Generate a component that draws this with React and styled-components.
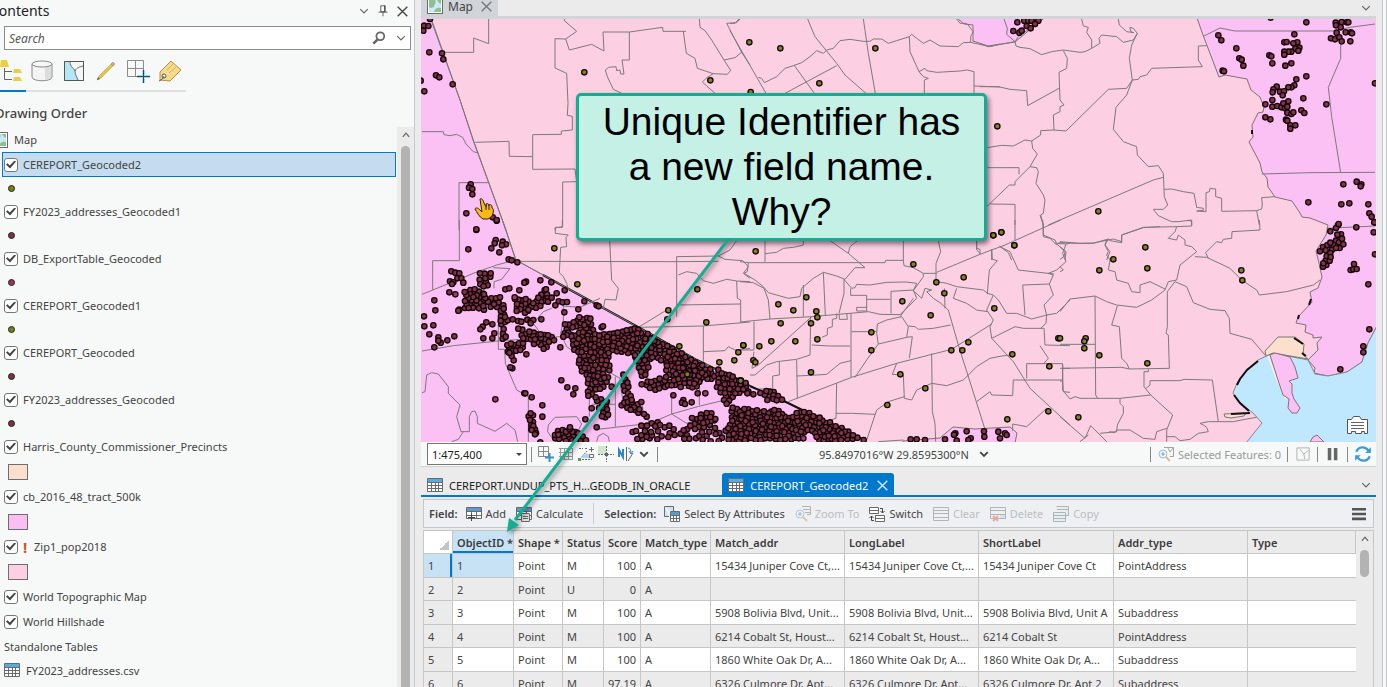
import React, { useState } from "react";
import styled, { createGlobalStyle } from "styled-components";

const layers = [
  { name: "CEREPORT_Geocoded2", dot: "#768022" },
  { name: "FY2023_addresses_Geocoded1", dot: "#7d3242" },
  { name: "DB_ExportTable_Geocoded", dot: "#9c3358" },
  { name: "CEREPORT_Geocoded1", dot: "#768022" },
  { name: "CEREPORT_Geocoded", dot: "#7d3242" },
  { name: "FY2023_addresses_Geocoded", dot: "#7d3242" },
  { name: "Harris_County_Commissioner_Precincts", swatch: "#fcdfcd" },
  { name: "cb_2016_48_tract_500k", swatch: "#fbbef3" },
  { name: "Zip1_pop2018", swatch: "#fccfe2", warning: true },
  { name: "World Topographic Map" },
  { name: "World Hillshade" },
];

const columns = [
  { name: "ObjectID *", width: 61 },
  { name: "Shape *", width: 49 },
  { name: "Status", width: 41 },
  { name: "Score", width: 37, right: true },
  { name: "Match_type", width: 70 },
  { name: "Match_addr", width: 134 },
  { name: "LongLabel", width: 134 },
  { name: "ShortLabel", width: 135 },
  { name: "Addr_type", width: 134 },
  { name: "Type" },
];

const records = [
  ["1", "Point", "M", "100", "A", "15434 Juniper Cove Ct,...", "15434 Juniper Cove Ct,...", "15434 Juniper Cove Ct", "PointAddress", ""],
  ["2", "Point", "U", "0", "A", "", "", "", "", ""],
  ["3", "Point", "M", "100", "A", "5908 Bolivia Blvd, Unit...", "5908 Bolivia Blvd, Unit...", "5908 Bolivia Blvd, Unit A", "Subaddress", ""],
  ["4", "Point", "M", "100", "A", "6214 Cobalt St, Houst...", "6214 Cobalt St, Houst...", "6214 Cobalt St", "PointAddress", ""],
  ["5", "Point", "M", "100", "A", "1860 White Oak Dr, A...", "1860 White Oak Dr, A...", "1860 White Oak Dr, A...", "Subaddress", ""],
  ["6", "Point", "M", "97.19", "A", "6326 Culmore Dr, Apt...", "6326 Culmore Dr, Apt...", "6326 Culmore Dr, Apt 2", "Subaddress", ""],
];

// Map sheets. Coordinates are thirds of a pixel, measured from the sheet origin.
const sheets = [
  {
    x: 420, y: 0,
    lines: [
      "32,57 120,300 160,420 258,690",
      "72,157 161,157 161,114 206,131 206,57",
      "6,395 70,395 72,404 90,407 110,403 128,412 138,432 160,455 172,458",
      "166,427 267,424 268,469 338,470 338,404 424,403 424,393 457,390 457,349 442,346 444,310 440,220 405,204 405,116 437,117 448,150 515,133 552,153 549,96 628,96 728,82 729,94 798,94",
      "790,94 799,160 825,175 832,205 880,221 922,223 932,211 912,180 875,120 855,92 840,82 838,57",
      "338,470 338,508 465,507 470,545 428,546 428,680 405,684 405,690",
      "437,117 470,94 433,62 433,57",
      "628,96 628,180 606,180 612,222 602,222 600,210 590,212 588,200 566,202 556,210 562,230 580,268 605,280",
      "117,690 117,548 206,548",
      "912,180 945,173 965,157 920,70 950,68 960,57",
      "965,157 990,195",
      "885,280 847,246 862,232 880,221",
    ],
    red: "12,77 25,78 10,92 28,157 66,160 70,178 48,226 58,232 98,253 13,274 2,242 152,553 147,563 157,567 157,583 139,640 218,652 230,662 169,690 30,57",
    green: "493,217 871,241",
  },
  {
    x: 420, y: 220,
    lines: [
      "118,0 118,122 38,122 38,210",
      "6,223 100,185 165,158 230,135 287,120",
      "247,0 287,120 370,165 655,322 830,420 990,500",
      "287,124 770,125 895,124",
      "427,0 427,22 406,22 406,40 445,45 438,52 440,80 422,82 418,158 430,170 440,190 445,210",
      "569,60 575,180 595,205 588,240 555,238 550,265",
      "770,290 770,110 895,108 930,90 950,62",
      "895,108 915,118 968,122 985,140 970,160 990,175",
      "775,165 800,155 830,160 850,182 880,190 920,178 950,183 990,185",
      "950,183 952,235 962,240 962,252",
      "770,255 962,252 962,305",
      "655,322 740,270",
      "655,322 850,318 990,306",
      "850,318 850,425 870,440",
      "850,395 915,392 925,380 945,390 990,385",
      "6,393 100,377 235,363 420,350 560,335 655,322",
      "235,255 235,388 254,388 256,430 290,510 325,530 325,665",
      "222,205 222,185 245,178 270,146 220,143",
      "6,518 15,515 20,465 35,458 55,462 85,500 85,520 120,555 110,590 123,635 148,635 148,590 155,575 165,573 172,590 172,610 225,634 260,610 285,630 293,665",
      "95,665 115,658 130,635",
      "400,660 383,635 385,615 405,592 470,590 485,612 470,640",
      "395,265 370,275 340,310 365,345",
      "430,255 430,300 422,340 440,380 470,400 490,430",
      "430,258 480,262 540,235",
      "586,470 586,620",
      "508,500 508,590",
      "515,553 586,553",
      "530,628 560,625 690,610 755,582 840,558 915,540 990,500",
      "755,582 755,520",
      "755,582 800,610 830,600",
      "665,545 670,580 690,610",
      "790,505 838,505 838,555",
      "565,455 600,475 605,520 610,545",
      "530,665 535,648 550,640 565,650 568,665",
    ],
    red: "169,28 145,88 227,60 224,70 248,65 258,73 246,76 214,85 238,97 266,118 275,121 292,127 230,0 94,154 106,158 118,160 90,184 100,187 96,192 112,175 124,175 130,188 88,217 43,241 46,271 12,289 40,316 13,319 28,343 55,352 62,368 55,362 82,361 103,349 43,382 118,269 115,272 256,208 268,205 298,211 318,185 313,188 361,181 394,187 378,208 410,220 434,211 416,244 428,247 441,246 406,256 433,277 475,268 493,244 530,256 536,259 364,298 340,300 332,310 199,307 217,313 188,320 181,328 190,355 217,355 223,340 421,382 319,403 277,445 271,442 281,421 275,408 268,398 424,481 442,502 466,505 460,523 313,520 316,520 335,532 367,556 367,590 332,580 330,600 340,618 335,630 345,643 361,667 515,565 496,598 530,622 545,322 549,319 575,500 760,526 833,520 815,547 790,540 786,548 795,552 450,622 475,640 635,540 680,590 672,582 440,345 430,350 228,235 240,232",
    green: "403,85 472,193 832,208 745,271 742,298 859,307 778,379 970,376 955,397 943,421 898,427 802,463 958,482",
    pink: "106,223 226,538 478,292 284,232 856,520",
    clusters: [
      [28, "132,215 160,205 195,220 195,270 150,262 135,275"],
      [10, "180,160 215,158 205,200 175,200"],
      [9, "190,222 235,240 240,270 210,265"],
      [20, "285,235 325,235 332,280 285,275"],
      [20, "320,270 378,205 398,235 350,270"],
      [15, "240,255 250,255 262,360 242,355"],
      [10, "255,290 340,300 335,310 255,300"],
      [14, "255,365 310,368 310,388 262,400"],
      [28, "290,325 400,345 405,360 375,390 310,355"],
      [26, "435,305 510,290 530,345 430,350"],
      [54, "450,350 480,335 555,340 560,395 460,390"],
      [52, "475,395 565,395 570,455 530,470 478,460"],
      [120, "560,340 650,325 700,350 690,425 650,425 640,400 560,400"],
      [140, "690,350 760,385 870,445 890,475 840,480 740,430 690,410"],
      [20, "640,400 690,430 670,480 655,440"],
      [66, "740,430 860,460 830,505 740,500 700,515 660,490 700,475 735,475"],
      [22, "500,465 575,470 560,500 505,530"],
      [14, "525,530 565,545 565,600 545,590"],
      [28, "605,455 620,470 640,560 665,545 655,580 600,555 615,525"],
      [38, "890,445 990,495 980,515 930,540 890,510"],
      [7, "912,540 930,540 925,555 912,550"],
      [54, "935,560 990,575 990,665 925,662"],
      [56, "620,630 700,600 780,625 880,580 900,620 940,625 900,665 645,660"],
      [14, "810,595 870,575 895,600 850,610"],
      [32, "405,635 450,625 505,660 495,665 400,665"],
      [7, "325,585 340,585 350,645 330,635"],
    ],
  },
  {
    x: 740, y: 220,
    lines: [
      "0,125 25,128 435,128 437,121 490,121 490,60",
      "75,60 75,125",
      "75,101 110,97 130,85 160,82 190,75 190,60",
      "25,128 22,155 12,160 45,180 70,200 85,218 145,235 180,230 185,205 220,175 250,157 290,168 315,178 345,143 375,143 325,100 270,62",
      "0,185 40,188 72,205 85,240 90,297",
      "0,306 90,297 215,290 330,280 385,275 420,283 480,284 505,260 530,235 520,210 453,214 453,280",
      "190,195 190,290", "250,157 256,285", "312,178 312,220 297,280",
      "325,100 330,80 355,60",
      "312,178 335,205 345,203 350,193 390,195 440,187 500,186 530,190 520,212 550,170 550,160",
      "332,205 332,226 380,226 380,273 350,273 350,262 380,262", "380,238 450,238",
      "490,121 492,137 520,143 550,160 590,160",
      "590,157 720,103 795,75 962,0",
      "595,62 602,95 588,130 588,185",
      "710,62 710,85 720,88 720,103",
      "825,0 825,60", "780,80 810,95 835,150 942,162",
      "755,88 757,118 772,122 748,150 742,220 760,225",
      "908,0 910,45 945,60 950,70 978,72 990,70", "978,72 968,100 978,125 950,150 925,160 940,165 928,192",
      "848,195 928,192 940,225 912,255 920,285 875,297 830,280 800,280 775,240 760,225 740,270 760,300 750,320 755,355",
      "848,195 855,285",
      "920,285 950,280 990,240", "920,285 918,310 902,325",
      "520,212 545,235 555,205 575,210 560,215 580,235 600,248 625,270 655,375 735,628",
      "520,235 480,290",
      "590,185 620,190 650,200 690,205 730,210 745,222",
      "650,205 640,235 680,250 710,270 742,275",
      "613,205 615,265",
      "410,340 412,312 440,300 485,290 505,320 500,352 415,372 410,340",
      "505,318 525,320 535,328 580,325 632,315",
      "333,280 333,472", "335,335 410,335", "500,352 517,350 508,415",
      "415,372 380,420 345,472",
      "145,545 335,472 470,430 635,388 755,312",
      "755,355 825,320 850,325 912,325 915,375 990,377",
      "755,355 820,425 870,505 962,590 990,615",
      "900,377 925,415 910,432",
      "860,475 860,431 968,431 968,480", "820,480 968,480 970,515 990,517", "968,445 990,445",
      "820,480 818,527 755,525 750,515 710,545",
      "575,400 577,575 585,610 587,665",
      "575,490 620,497 670,480 710,440 750,415 785,408 810,405",
      "470,430 457,463 490,465 493,535 515,540 530,510 575,490",
      "493,530 445,545 410,570 380,660",
      "290,490 288,595 255,605", "288,580 335,580 405,583",
      "170,420 172,535", "170,468 230,465 260,463 300,430 333,422",
      "0,390 42,390 42,305",
      "42,395 36,445 55,435 215,290",
      "30,465 45,465 80,435 110,425 170,418 210,405 212,290",
      "118,425 118,465 98,468 98,505",
      "215,375 270,378 330,378",
      "320,280 322,298 298,298 298,282", "290,280 290,295 277,298 277,320 262,325 262,345 245,352",
      "818,632 818,612 860,620 920,565",
      "415,665 490,660",
    ],
    red: "646,640 642,644 680,634 692,655 685,660 732,634 733,650 775,635 795,640 800,645 780,655 650,662 512,658 530,658 555,660 615,658 10,508 25,515 40,523 22,520",
    green: "47,94 520,133 671,172 589,187 613,220 487,244 763,265 572,286 115,253 199,232 160,271 229,274 232,292 213,310 122,310 232,358 94,364 166,364 10,376 58,379 40,421 46,427 394,337 394,391 634,391 667,391 685,367 955,355 817,403 481,463 928,439 556,505 442,555 925,574 802,598 213,457 760,46 784,37 823,76 2,482",
    pink: "190,655",
    clusters: [
      [32, "55,515 105,510 135,545 80,540"],
      [150, "0,565 50,570 80,575 120,565 140,595 160,590 180,660 0,662"],
      [110, "165,580 190,570 300,620 375,660 240,662 215,640 180,635"],
    ],
  },
  {
    x: 1060, y: 220,
    lines: [
      "0,68 50,70 100,70 145,57 150,62 185,68 185,45 250,22 350,20 395,18 395,5 385,0",
      "0,80 15,95 12,110 0,118", "0,140 10,150 0,155",
      "145,57 135,75 145,95 140,105 150,120 145,150 165,155 170,180 205,190 215,215 240,218 240,195 270,185 315,207",
      "350,20 345,35 325,55 350,60 355,45 375,60 375,75 395,80 410,95 360,135 350,180 325,185 315,210 275,240 230,262 170,255 140,245 105,228 30,237 0,275",
      "405,110 440,112 510,145 545,180 590,210 598,225 680,215 760,195 780,180",
      "445,115 437,98 470,65 485,68 490,58 515,55 516,35 600,30 598,0",
      "345,185 380,200 400,248 450,268 495,272 508,295 510,340 575,358 615,405",
      "345,185 322,215 322,320 318,340 325,345 328,445 208,447 200,430 185,415 178,320 155,315 172,258",
      "0,445 185,442 208,447",
      "105,228 107,525 113,535", "0,373 105,373", "0,483 8,483",
      "8,435 8,510 30,537 45,530 60,535 180,535 272,525 252,500 252,455 265,455 265,448",
      "258,505 270,495 270,482 360,482 372,478 457,480 475,605",
      "272,525 338,585 320,630 320,665",
      "180,535 180,550 190,560 190,580 172,615 170,635 120,640",
      "0,590 75,655 92,617 140,665", "60,665 85,645",
      "148,635 165,638 170,630 210,630 250,655 285,658 290,635 320,625",
      "320,650 345,650 360,662 390,658 415,640 445,635 440,622 430,615 420,610 445,605 475,605 520,605 560,597 590,592",
      "800,25 945,18",
    ],
    red: "834,16 828,24 811,34 889,22 943,7 941,37 945,103 882,132 872,150 880,148 890,147 925,193 928,328 910,379 910,397 841,448",
    green: "256,82 160,118 118,151 262,145 544,151 547,181 77,355 73,364 73,385 118,406 262,430 55,592 0,355",
    clusters: [[32, "775,95 800,62 825,70 832,42 850,42 852,75 840,85 818,85 808,135 782,145 800,100"]],
  },
  {
    x: 980, y: 0,
    lines: [
      "72,57 82,85 80,103 105,125 115,110 190,57",
      "0,130 25,140 105,125 108,138 120,142 150,146 185,164 215,155 250,150 300,157 315,155 335,145 335,120 320,97 325,82 310,78 305,57",
      "335,145 360,130 357,115 365,105 410,110 430,127 460,120 472,100 460,85 450,82 452,95 462,98 440,95 418,75 415,57",
      "472,100 455,135 448,175 457,240 440,265 385,268 258,393 222,390 220,345 240,335 240,320 252,315 240,300 237,217 260,205 262,175 250,152",
      "457,240 475,238 480,230 500,225 515,205 667,200 655,180 655,138 680,137",
      "672,108 720,84 765,93 1060,93 1110,82 1185,72",
      "1082,130 1082,175 1045,262 1055,350 1082,517",
      "845,522 990,518 1185,517",
      "457,240 440,285 408,322 400,388 430,425 470,440 472,465 505,500 535,497 550,520 553,590 563,615 550,628 520,628 535,647 575,665 595,665 635,660 635,675",
      "550,532 520,540 205,675",
      "553,568 575,567 610,575 642,580 650,622 670,625 670,631 650,633 678,635 678,578 688,575 690,565 707,567 707,590 725,595 725,634 830,632 845,627 847,615 845,593 885,590",
      "830,632 838,675",
      "0,260 55,260 90,268 140,272 143,317 237,265",
      "222,390 182,392 182,405 155,423 135,420 100,438 65,436 22,443",
      "155,423 158,445 172,462 150,500 105,545 105,555 88,555 25,615 0,640",
      "22,503 117,503 117,523",
      "150,500 170,503 175,515 168,550 190,585 195,600 190,640 182,645 190,675",
      "30,612 105,613 105,675",
    ],
    red: "715,106 724,121 769,145 778,175 785,179 790,197 728,212 732,214 979,67 872,53 943,103 913,127 920,126 952,127 940,130 958,143 946,146 955,152 934,155 925,155 913,155 913,164 868,166 874,169 877,190 934,190 916,197 979,229 949,238 943,256 934,262 925,262 890,260 880,268 878,277 900,275 912,274 908,286 970,295 877,300 856,313 877,320 892,318 904,322 915,325 925,304 910,310 922,320 922,338 934,342 940,337 964,331 973,339 856,352 871,358 918,359 922,362 931,376 946,376 931,386 1039,313 1067,68 1085,66 1100,67 1105,67 1068,76 1082,82 1070,98 1097,97 1112,97 1116,100 1053,115 1065,118 1078,112 1085,124 1111,124 1185,250 1090,553 1130,545 1144,553 1142,559 985,607 1084,613 1108,610 1165,613 1168,640 1175,650 1183,667 1076,672 112,67 133,62 145,62 155,62 175,62 100,93 118,98 125,92 140,78 152,85 165,72",
    green: "52,379 355,634",
  },
  {
    x: 730, y: 0,
    lines: [
      "0,92 108,280", "0,70 15,70 27,57",
      "85,232 95,235 103,248 140,230 165,205 190,197 215,188 240,170 260,152 280,160 290,150 310,145 330,122 360,118 400,124 420,124 430,117 455,117 475,130 500,122 538,110 545,103 580,130 600,120 630,138 685,140 700,128 722,127",
      "233,57 255,110 320,190 345,225 408,280",
      "400,57 415,160 436,280",
      "538,110 540,155 567,215 585,205 590,212 620,217 690,213 712,210 732,215 732,280",
      "567,215 580,230 595,235 583,240 583,280",
      "732,258 810,261",
      "165,280 320,197", "192,195 253,280",
      "680,57 690,70 710,70 730,95 722,110 722,127 780,140 810,132",
    ],
    green: "58,127 151,145 62,276 268,250 436,145",
  },
  {
    x: 960, y: 60,
    lines: [
      "250,495 250,530 270,535 290,555 300,545 360,550 400,549 460,537 485,545 485,525 550,503 600,500",
      "50,542 50,570 60,580", "95,600 95,570", "118,558 145,578 155,600",
      "440,540 435,555 450,575 440,600", "285,548 318,575 315,600",
      "240,465 250,495",
    ],
    green: "100,526 124,517 163,556",
  },
];

const parse = (text = "") =>
  text.split(" ").filter(Boolean).map((pair) => pair.split(",").map(Number));

const inside = ([px, py], ring) => {
  let hit = false;
  for (let i = 0, j = ring.length - 1; i < ring.length; j = i++) {
    const [xi, yi] = ring[i];
    const [xj, yj] = ring[j];
    if (yi > py !== yj > py && px < ((xj - xi) * (py - yi)) / (yj - yi) + xi) hit = !hit;
  }
  return hit;
};

// fills a ring with points, always the same ones for the same seed
const scatter = (count, text, seed) => {
  const ring = parse(text);
  const xs = ring.map((p) => p[0]);
  const ys = ring.map((p) => p[1]);
  const left = Math.min(...xs);
  const top = Math.min(...ys);
  const w = Math.max(...xs) - left;
  const h = Math.max(...ys) - top;
  let s = seed * 7919 + 17;
  const next = () => {
    s = (s * 48271) % 2147483647;
    return s / 2147483647;
  };
  const points = [];
  for (let i = 0; i < count * 30 && points.length < count; i++) {
    const p = [Math.round(left + next() * w), Math.round(top + next() * h)];
    const free = points.every((q) => Math.hypot(q[0] - p[0], q[1] - p[1]) > 10);
    if (free && inside(p, ring)) points.push(p);
  }
  return points;
};

const Dots = ({ points, fill }) =>
  points.map(([x, y], i) => <circle key={i} cx={x} cy={y} r="8" fill={fill} />);

const MapDrawing = () => (
  <MapSvg viewBox="421 19 955 423" preserveAspectRatio="xMinYMin slice" aria-label="Map">
    <rect x="421" y="19" width="1600" height="1000" fill="#fccfe2" />
    <g fill="#fbc0f4" stroke="#7f7277" strokeWidth="1">
      <path d="M420 18H431L460 100L473 140L506 230L516 260L543 275L638 327L697 360L743 383L755 389H773L788 403L868 443H420Z" />
      <path d="M957 18L964 24L973 25L973 41L988 46L1015 42L1044 18Z" />
      <path d="M1197 18L1203 35L1219 77L1225 75L1247 79L1251 90L1260 97L1264 107L1263 112L1258 113L1252 125L1253 137L1249 142L1260 163L1262 172L1267 178L1268 187L1275 197L1292 201L1300 213L1302 217L1310 218L1328 225L1326 235L1316 251L1319 263L1322 277L1318 288L1310 292L1312 302L1298 317L1296 323L1306 325L1305 332L1313 335V338L1322 337L1317 343L1318 350L1308 360L1315 368L1314 373L1328 376L1347 372L1362 362L1368 343L1377 326V18Z" />
      <path d="M903 443V441L940 438L953 427L975 429L1010 427L1017 433L1015 443Z" />
    </g>
    <path d="M1377 326L1368 343L1362 362L1347 372L1328 376L1315 374L1308 360L1273 353L1258 360L1247 370L1237 383L1233 393L1240 403L1253 413L1262 423L1246 443H1377Z" fill="#bfe8fe" stroke="#85868c" />
    <path d="M1265 351L1278 337L1295 337L1304 344L1303 355L1308 359L1273 353L1266 356Z" fill="#fcdfcd" stroke="#777" />
    <path d="M1268 356L1276 377L1286 399" fill="none" stroke="#f3efe4" strokeWidth="2" />
    <path d="M1270 355L1275 353L1290 357L1295 367L1298 378L1289 381L1292 384L1292 393L1294 399L1300 408L1297 413L1292 413L1288 408L1289 399L1283 395L1277 377Z" fill="#fbc0f4" stroke="#857079" />
    <path d="M1310 442L1313 437L1317 435L1324 442Z" fill="#fbc0f4" stroke="#857079" />
    <path d="M1224 414L1246 413L1244 416L1231 418L1225 417Z" fill="#fcdfcd" stroke="#777" />
    <g fill="none" stroke="#111" strokeWidth="2">
      <path d="M1258 361L1247 370L1240 379L1237 385M1234 395L1240 403L1249 411M1231 414L1250 413M1294 338L1303 344M1302 353L1306 356M1311 299L1309 305M1299 315L1298 319M1252 130V134" />
      <path d="M543 275L638 327L697 360L750 386L788 403L866 441" />
    </g>
    {sheets.map((sheet, n) => (
      <g key={n} transform={`translate(${sheet.x} ${sheet.y}) scale(${1 / 3})`}>
        <g fill="none" stroke="#7b7b7b" strokeWidth="3">
          {sheet.lines.map((line) => (
            <polyline key={line} points={line} />
          ))}
        </g>
      </g>
    ))}
    {sheets.map((sheet, n) => (
      <g key={n} transform={`translate(${sheet.x} ${sheet.y}) scale(${1 / 3})`} stroke="#14080c" strokeWidth="4">
        {(sheet.clusters || []).map(([count, ring], i) => (
          <Dots key={i} points={scatter(count, ring, i + n * 40 + 1)} fill="#803445" />
        ))}
        <Dots points={parse(sheet.red)} fill="#803445" />
        <Dots points={parse(sheet.pink)} fill="#a8386a" />
        <Dots points={parse(sheet.green)} fill="#7a8524" />
      </g>
    ))}
    {/* hand pointer */}
    <path d="M480 199C482 198 483 200 484 203L486 207V204C488 203 489 204 489 206V205C491 204 492 205 492 208C494 208 494 214 491 217L488 219H483C479 217 477 212 475 209C476 207 478 208 480 210L482 212Z" fill="#fdb913" stroke="#2a2117" strokeWidth="1" />
    <path d="M486 205V210M489 206V210" stroke="#2a2117" />
    {/* pop-up notes */}
    <path d="M1347.500 419.500H1351.500L1353.500 416.500H1359.500L1361.500 419.500H1367.500V433.500H1364.500V431.500H1361.500V433.500H1355.500V431.500H1351.500V433.500H1347.500Z" fill="#fff" stroke="#555" />
    <path d="M1351 422.500H1364M1351 425.500H1364M1351 428.500H1364" stroke="#666" />
  </MapSvg>
);

const Icon = ({ size = 16, children, ...rest }) => (
  <svg width={size} height={size} viewBox="0 0 16 16" fill="none" stroke="#6a6a6a" aria-hidden="true" {...rest}>
    {children}
  </svg>
);

const Chevron = ({ up, bold }) => (
  <Icon size={10} strokeWidth={bold ? 3 : 2} stroke={bold ? "#444" : "#666"}>
    <path d={up ? "M3 11L8 5L13 11" : "M2 5L8 11L14 5"} />
  </Icon>
);

const CloseIcon = ({ color = "#777" }) => (
  <Icon size={11} stroke={color} strokeWidth="2">
    <path d="M1 1L15 15M15 1L1 15" />
  </Icon>
);

const TableIcon = () => (
  <Icon>
    <path d="M0.500 1.500H15.500V14.500H0.500Z" fill="#fff" />
    <path d="M1 2H15V5H1Z" fill="#5ba9dd" stroke="none" />
    <path d="M0.500 5.500H15.500M0.500 8.500H15.500M0.500 11.500H15.500M4.500 5V14M8.500 5V14M11.500 5V14" />
  </Icon>
);

const MapIcon = () => (
  <Icon>
    <rect x="0.500" y="0.500" width="15" height="15" fill="#fff" />
    <path d="M2 2H14V14H2Z" fill="#cfe8f5" stroke="none" />
    <path d="M2 2H8C10 4 7 6 7 9L4 10L2 9ZM10 2H14V6L12 5ZM7 14C8 10 11 9 14 10V14Z" fill="#8dbf8f" stroke="none" />
  </Icon>
);

const SearchIcon = () => (
  <Icon size={14} strokeWidth="2" stroke="#666">
    <circle cx="9.500" cy="6" r="4.500" />
    <path d="M6.500 9.500L1.500 14.500" strokeWidth="3" />
  </Icon>
);

const tabIcons = [
  <g key="order" stroke="none">
    <path d="M3 1H9L11 8H2Z" fill="#e8cf45" />
    <path d="M6.500 9V20.500H14M6.500 12.500H14" stroke="#666" />
    <path d="M16 10H22L24 14H15ZM16 18H22L24 22H15Z" fill="#e8cf45" />
  </g>,
  <g key="source">
    <path d="M2 5V18C2 23 22 23 22 18V5" fill="#f4f4f4" stroke="#8a8a8a" />
    <path d="M15 7H21V19L15 21Z" fill="#dcdcdc" stroke="none" />
    <ellipse cx="12" cy="5" rx="10" ry="3" fill="#f7f7f7" stroke="#8a8a8a" />
  </g>,
  <g key="selection">
    <rect x="2.500" y="2.500" width="19" height="19" fill="#f5f5f5" />
    <path d="M3 3H7C8 8 13 9 13 12C12 16 15 18 16 21H3Z" fill="#b3e7f8" stroke="none" />
    <path d="M8 3C8 8 12 9 13 12C13 16 15 18 16 21M13 12C15 8 18 8 21 7" />
    <rect x="2.500" y="2.500" width="19" height="19" rx="1" stroke="#555" />
  </g>,
  <g key="edit">
    <path d="M3 21L5 17L18 4L20 6L7 19Z" fill="#e3c54a" stroke="#b09530" strokeWidth="0.500" />
    <path d="M17 5L19 3L21 5L19 7Z" fill="#ec9a94" stroke="#888" strokeWidth="0.500" />
    <path d="M3 21L4 18L6 20Z" fill="#666" stroke="none" />
  </g>,
  <g key="snap">
    <path d="M1.500 1.500H17.500V17.500H1.500ZM9.500 1V17M1 9.500H17" stroke="#8c8c8c" />
    <path d="M17.500 11V24M11 17.500H24" stroke="#9edcf7" strokeWidth="3" />
    <path d="M17.500 11V24M11 17.500H24" stroke="#345" strokeWidth="1" />
  </g>,
  <g key="label">
    <path d="M2 13L13 2L23 11L12 22L2 21Z" fill="#f2dc8a" stroke="#c08b45" />
    <path d="M9 11L15 5M11 14L18 8" stroke="#d3ad77" />
    <circle cx="6" cy="17" r="2" fill="#fff" stroke="#555" />
    <path d="M6 17C5 19 4 21 1 22" stroke="#555" />
  </g>,
];
const tabNames = ["List By Drawing Order", "List By Data Source", "List By Selection", "List By Editing", "List By Snapping", "List By Labeling"];

const statusTools = {
  Constraints: (
    <>
      <path d="M0.500 0.500H10.500V10.500H0.500ZM5.500 0V11M0 5.500H11" stroke="#888" />
      <path d="M11.500 7V16M7 11.500H16" stroke="#3d8fc6" strokeWidth="2" />
    </>
  ),
  Grid: (
    <path d="M1 2.500H15M1 6.500H15M1 10.500H15M1 13.500H15M2.500 2V14M6.500 2V14M10.500 2V14M14.500 2V14" stroke="#9a9a9a" />
  ),
  Snapping: (
    <>
      <path d="M1 2.500H5M7 2.500H10M2 13L9 5M1 13.500H14" strokeDasharray="2 1" />
      <path d="M3 12L9 7L14 12Z" fill="#a9d5ef" stroke="none" />
      <path d="M11 3.500H16M13.500 1V6M11.500 8.500H15.500V11.500H11.500Z" />
      <rect x="0" y="12" width="3" height="3" fill="#5d9a5d" stroke="none" />
    </>
  ),
  Inference: (
    <>
      <path d="M0 0H8V8H0Z" fill="#cfe8cc" stroke="none" />
      <path d="M0 8.500H16M8.500 0V16" strokeDasharray="2 1" />
      <rect x="7" y="7" width="3" height="3" fill="#666" stroke="none" />
    </>
  ),
  "North arrow": (
    <>
      <path d="M1 11V4L5 11V3" stroke="#2d87c3" strokeWidth="2" />
      <path d="M8.500 1V15M10 15L15 7" />
      <path d="M10 2C12 2 13 4 13 7M11 5L13 8L15 5" stroke="#2d87c3" />
    </>
  ),
};

const toolIcons = {
  Add: (
    <>
      <path d="M0.500 1.500H15.500V12.500H0.500ZM0 5.500H16M0 9.500H16M5.500 5V13M10.500 5V13" fill="#fff" />
      <path d="M1 2H15V5H1Z" fill="#5b9bd0" stroke="none" />
      <path d="M5.500 8V15M2 11.500H9" stroke="#444" />
    </>
  ),
  Calculate: (
    <>
      <path d="M0.500 1.500H15.500V13.500H0.500ZM0 5.500H16M0 9.500H16M5.500 5V13M10.500 5V13" fill="#fff" />
      <path d="M1 2H15V5H1Z" fill="#5b9bd0" stroke="none" />
      <path d="M5.500 7.500H13.500V15.500H5.500ZM7 10.500H12M7 12.500H12" fill="#ddd" />
    </>
  ),
  "Select By Attributes": (
    <>
      <path d="M0.500 0.500H9.500V7M0.500 0.500V10.500H5" fill="#c9e8f6" />
      <path d="M6.500 5.500H15.500V15.500H6.500ZM6 9.500H16M6 12.500H16M9.500 9V15M12.500 9V15" fill="#fff" />
      <path d="M7 6H15V9H7Z" fill="#5b9bd0" stroke="none" />
    </>
  ),
  "Zoom To": (
    <>
      <path d="M7 0.500H15.500V8.500H12M8 3.500H15M10 6.500H15" />
      <circle cx="5" cy="8" r="4" fill="#e3f1fa" stroke="#5b9bd0" />
      <path d="M5 6V10M3 8H7" />
      <path d="M8 11L12 15" stroke="#d98e4a" strokeWidth="2" />
    </>
  ),
  Switch: (
    <>
      <path d="M0.500 1.500H9.500V7.500H0.500ZM0 4.500H10M6.500 9.500H15.500V15.500H6.500ZM6 12.500H16" fill="#fff" />
      <path d="M11 2.500H13.500V7M11.500 5L13.500 7L15.500 5M5 14.500H2.500V10M0.500 12L2.500 10L4.500 12" stroke="#444" />
    </>
  ),
  Clear: <path d="M0.500 1.500H15.500V14.500H0.500ZM0 4.500H16M0 7.500H16M0 11.500H16" />,
  Delete: (
    <>
      <path d="M0.500 1.500H15.500V12.500H0.500ZM0 4.500H16M0 8.500H16" />
      <path d="M10 9H15V12H10Z" fill="#a9dcec" stroke="none" />
      <path d="M3 10L8 15M8 10L3 15" stroke="#d9603b" strokeWidth="2" />
    </>
  ),
  Copy: (
    <>
      <path d="M3.500 0.500H15.500V9.500H12.500M4 3.500H15" fill="#d5eef3" />
      <path d="M0.500 6.500H12.500V15.500H0.500ZM0 9.500H13M0 12.500H13" fill="#d5eef3" />
    </>
  ),
};

const Tool = ({ name, off }) => (
  <ToolButton type="button" disabled={off}>
    <Icon>{toolIcons[name]}</Icon>
    {name}
  </ToolButton>
);

const ContentsPane = () => {
  const [off, setOff] = useState([]);
  const toggle = (name) =>
    setOff(off.includes(name) ? off.filter((n) => n !== name) : [...off, name]);

  return (
    <Pane>
      <PaneHeader>
        <PaneTitle>Contents</PaneTitle>
        <IconButton type="button" aria-label="Menu"><Chevron /></IconButton>
        <IconButton type="button" aria-label="Auto hide">
          <Icon size={12} stroke="#333">
            <path d="M5 1H11V9H5ZM2 9.500H14M8 10V15M10 1V9" />
          </Icon>
        </IconButton>
        <IconButton type="button" aria-label="Close"><CloseIcon color="#444" /></IconButton>
      </PaneHeader>
      <SearchBox>
        <SearchInput type="text" placeholder="Search" aria-label="Search" />
        <SearchIcon />
        <Chevron />
      </SearchBox>
      <PaneTabs>
        {tabIcons.map((icon, i) => (
          <PaneTab key={i} type="button" $active={i === 0} aria-label={tabNames[i]}>
            <svg width="24" height="24" viewBox="0 0 24 24" fill="none" stroke="#6a6a6a">{icon}</svg>
          </PaneTab>
        ))}
      </PaneTabs>
      <PaneHeading>Drawing Order</PaneHeading>
      <TreeArea>
        <Tree>
          <MapRow><MapIcon />Map</MapRow>
          {layers.map((layer, i) => (
            <React.Fragment key={layer.name}>
              <LayerRow $selected={i === 0}>
                <Checkbox type="checkbox" checked={!off.includes(layer.name)} onChange={() => toggle(layer.name)} />
                {layer.warning && <Warning>!</Warning>}
                {layer.name}
              </LayerRow>
              {layer.dot && <DotRow><Dot $color={layer.dot} /></DotRow>}
              {layer.swatch && <SwatchRow><Swatch $color={layer.swatch} /></SwatchRow>}
            </React.Fragment>
          ))}
          <TreeRow>Standalone Tables</TreeRow>
          <TreeRow><TableIcon />FY2023_addresses.csv</TreeRow>
        </Tree>
        <Scrollbar>
          <Chevron up />
          <Thumb $fill />
        </Scrollbar>
      </TreeArea>
    </Pane>
  );
};

const StatusBar = () => (
  <Status>
    <ScaleBox>
      <ScaleSelect aria-label="Map scale">
        <option>1:475,400</option>
      </ScaleSelect>
      <Caret />
    </ScaleBox>
    <Divider />
    <StatusTools>
      {Object.keys(statusTools).map((name) => (
        <IconButton key={name} type="button" aria-label={name}><Icon>{statusTools[name]}</Icon></IconButton>
      ))}
      <IconButton type="button" aria-label="More"><Chevron bold /></IconButton>
    </StatusTools>
    <Divider />
    <Coordinates>
      95.8497016°W 29.8595300°N
      <Chevron bold />
    </Coordinates>
    <Divider />
    <SelectedCount>
      <Icon>
        <path d="M6 1.500H15.500V10.500H12M10 2L12 6L15 2" />
        <circle cx="5" cy="8" r="4" fill="#e3f1fa" stroke="#5b9bd0" />
        <path d="M5 6V10M3 8H7" />
        <path d="M8 11L12 15" stroke="#d98e4a" strokeWidth="2" />
      </Icon>
      Selected Features: 0
    </SelectedCount>
    <Divider />
    <StatusCell>
      <Icon size={14} stroke="#aaa">
        <path d="M1 1H15V15H1ZM4 2L9 8L14 4M9 8L10 14" />
      </Icon>
    </StatusCell>
    <Divider />
    <StatusCell>
      <Icon size={14} fill="#666" stroke="none">
        <path d="M2 1H6V15H2ZM9 1H13V15H9Z" />
      </Icon>
    </StatusCell>
    <Divider />
    <StatusCell>
      <Icon size={18} stroke="#3f9ad6" strokeWidth="2">
        <path d="M2 6C4 1 10 1 13 5M14 10C12 15 6 15 3 11" />
        <path d="M15 2V7H10ZM1 14V9H6Z" fill="#3f9ad6" stroke="none" />
      </Icon>
    </StatusCell>
  </Status>
);

const AttributeTable = () => (
  <Attributes>
    <TableTabs>
      <TableTab type="button"><TableIcon />CEREPORT.UNDUP_PTS_H...GEODB_IN_ORACLE</TableTab>
      <TableTab type="button" $active><TableIcon />CEREPORT_Geocoded2<CloseIcon color="#d6ebf9" /></TableTab>
      <TabMenu type="button" aria-label="Open tables"><Chevron /></TabMenu>
    </TableTabs>
    <Toolbar>
      <ToolLabel>Field:</ToolLabel>
      <Tool name="Add" />
      <Tool name="Calculate" />
      <ToolDivider />
      <ToolLabel>Selection:</ToolLabel>
      <Tool name="Select By Attributes" />
      <Tool name="Zoom To" off />
      <Tool name="Switch" />
      <Tool name="Clear" off />
      <Tool name="Delete" off />
      <Tool name="Copy" off />
      <TabMenu type="button" aria-label="Table options">
        <Icon size={14} stroke="#555" strokeWidth="3"><path d="M0 2.500H16M0 8H16M0 13.500H16" /></Icon>
      </TabMenu>
    </Toolbar>
    <GridArea>
      <Grid>
        <colgroup>
          <Col $width={29} />
          {columns.map((col) => <Col key={col.name} $width={col.width} />)}
        </colgroup>
        <thead>
          <tr>
            <Corner aria-label="Select all" />
            {columns.map((col, i) => (
              <HeadCell key={col.name} $current={i === 0} $right={col.right}>{col.name}</HeadCell>
            ))}
          </tr>
        </thead>
        <tbody>
          {records.map((record, r) => (
            <Record key={record[0]} $odd={r % 2 === 1}>
              <RowNumber $current={r === 0}>{r + 1}</RowNumber>
              {record.map((value, c) => (
                <Cell key={c} $current={r === 0 && c === 0} $right={columns[c].right}>{value}</Cell>
              ))}
            </Record>
          ))}
        </tbody>
      </Grid>
      <Scrollbar>
        <Chevron up />
        <Thumb />
      </Scrollbar>
    </GridArea>
  </Attributes>
);

const App = () => {
  return (
    <>
      <GlobalStyle />
      <Page>
        <ContentsPane />
        <Main>
          <ViewTabs>
            <ViewTab type="button"><MapIcon />Map<CloseIcon /></ViewTab>
            <TabMenu type="button" aria-label="Open views"><Chevron /></TabMenu>
          </ViewTabs>
          <MapView>
            <MapDrawing />
            <Arrow viewBox="0 0 230 300">
              <path d="M224 2L12 281" stroke="#12ae91" strokeWidth="3" />
              <path d="M4 293L6 279L16 286Z" fill="#12ae91" />
            </Arrow>
            <Callout>Unique Identifier has a new field name. Why?</Callout>
          </MapView>
          <StatusBar />
          <AttributeTable />
        </Main>
        <Edge />
      </Page>
    </>
  );
};

export default App;

const GlobalStyle = createGlobalStyle`
  * {
    box-sizing: border-box;
  }
  body {
    margin: 0;
    overflow: hidden;
    background: #ebebeb;
    color: #444;
    font-family: "Noto Sans", "Open Sans", sans-serif;
    font-size: 12px;
  }
  button, input, select {
    font: inherit;
    color: inherit;
  }
  svg {
    flex: none;
  }
`;
const Page = styled.div`
  display: flex;
  height: 100vh;
`;
const Pane = styled.aside`
  flex: none;
  display: flex;
  flex-direction: column;
  width: 425px;
  margin-left: -10px;
  background: #f7f9f8;
  border-right: 1px solid #c8cbce;
`;
const PaneHeader = styled.header`
  display: flex;
  align-items: center;
  gap: 7px;
  height: 22px;
  padding-right: 6px;
`;
const PaneTitle = styled.h1`
  flex: 1;
  margin: 0;
  color: #222;
  font-size: 14px;
  font-weight: 400;
  line-height: 22px;
`;
const IconButton = styled.button`
  display: flex;
  align-items: center;
  justify-content: center;
  min-width: 12px;
  padding: 0;
  border: 0;
  background: none;
`;
const SearchBox = styled.div`
  display: flex;
  align-items: center;
  gap: 10px;
  height: 24px;
  margin: 4px 3px 0 14px;
  padding: 0 4px;
  border: 1px solid #8b8b8b;
  background: #fff;
`;
const SearchInput = styled.input`
  flex: 1;
  padding: 0;
  border: 0;
  outline: none;
  font-style: italic;
  &::placeholder {
    color: #555;
  }
`;
const PaneTabs = styled.nav`
  display: flex;
  height: 42px;
  margin-left: 4px;
`;
const PaneTab = styled.button`
  display: flex;
  align-items: center;
  justify-content: center;
  width: 32px;
  padding: 2px 0 0;
  border: 0;
  border-bottom: 2px solid ${(p) => (p.$active ? "#0079c8" : "#e0e0e0")};
  background: none;
`;
const PaneHeading = styled.h2`
  margin: 11px 0 3px 5px;
  font-size: 13px;
  font-weight: 500;
  line-height: 21px;
`;
const TreeArea = styled.div`
  display: flex;
  flex: 1;
  min-height: 0;
`;
const Tree = styled.div`
  flex: 1;
  min-width: 0;
  padding: 0 1px 0 12px;
  font-size: 11px;
`;
const TreeRow = styled.div`
  display: flex;
  align-items: center;
  gap: 6px;
  height: 24px;
  padding-left: 2px;
`;
const MapRow = styled(TreeRow)`
  height: 25px;
  margin-left: -12px;
`;
const LayerRow = styled.label`
  display: flex;
  align-items: center;
  gap: 5px;
  height: 25px;
  padding-left: 1px;
  border: 1px solid ${(p) => (p.$selected ? "#0079c8" : "transparent")};
  background: ${(p) => (p.$selected ? "#c5dbee" : "none")};
`;
const Checkbox = styled.input`
  appearance: none;
  display: grid;
  place-items: center;
  width: 14px;
  height: 14px;
  margin: 0;
  border: 1px solid #777;
  border-radius: 3px;
  background: #fff;
  &:checked::before {
    content: "";
    width: 10px;
    height: 8px;
    background: #444;
    clip-path: polygon(0 50%, 15% 35%, 38% 62%, 85% 0, 100% 14%, 40% 100%);
  }
`;
const Warning = styled.b`
  width: 6px;
  color: #d0532b;
  font-size: 15px;
`;
const DotRow = styled.div`
  display: flex;
  align-items: center;
  height: 22px;
  padding-left: 6px;
`;
const Dot = styled.span`
  width: 7px;
  height: 7px;
  border: 1px solid #222;
  border-radius: 50%;
  background: ${(p) => p.$color};
`;
const SwatchRow = styled(DotRow)`
  height: 25px;
`;
const Swatch = styled.span`
  width: 20px;
  height: 16px;
  border: 1px solid #6e6e6e;
  background: ${(p) => p.$color};
`;
const Scrollbar = styled.div`
  flex: none;
  display: flex;
  flex-direction: column;
  align-items: center;
  gap: 6px;
  width: 17px;
  padding-top: 3px;
  background: #ebebeb;
`;
const Thumb = styled.div`
  flex: ${(p) => (p.$fill ? "1" : "none")};
  width: 9px;
  height: 27px;
  border-radius: ${(p) => (p.$fill ? "5px 5px 0 0" : "5px")};
  background: #b3b3b3;
`;
const Main = styled.main`
  flex: 1;
  display: flex;
  flex-direction: column;
  min-width: 0;
  padding: 0 6px;
`;
const ViewTabs = styled.div`
  flex: none;
  display: flex;
  align-items: flex-start;
  height: 19px;
  border-bottom: 3px solid #d1d4d8;
`;
const ViewTab = styled.button`
  display: flex;
  align-items: center;
  gap: 5px;
  height: 16px;
  padding: 0 6px 4px;
  border: 0;
  background: #d1d4d8;
  svg:last-child {
    margin-left: 3px;
  }
`;
const TabMenu = styled(IconButton)`
  align-self: center;
  margin-left: auto;
  margin-right: 4px;
`;
const MapView = styled.section`
  position: relative;
  flex: 1;
  min-height: 0;
`;
const MapSvg = styled.svg`
  display: block;
  width: 100%;
  height: 100%;
`;
const Callout = styled.div`
  position: absolute;
  top: 74px;
  left: 155px;
  width: 411px;
  padding: 3px 20px 4px;
  border: 3px solid #12ae91;
  border-radius: 5px;
  background: #c4f0e6;
  box-shadow: 2px 3px 5px rgba(60, 30, 50, 0.6);
  color: #000;
  font-family: "Liberation Sans", Arial, sans-serif;
  font-size: 39px;
  line-height: 45px;
  text-align: center;
`;
const Arrow = styled.svg`
  position: absolute;
  z-index: 1;
  top: 220px;
  left: 82px;
  width: 230px;
  height: 300px;
  filter: drop-shadow(2px 2px 2px rgba(0, 0, 0, 0.4));
  pointer-events: none;
`;
const Status = styled.div`
  flex: none;
  display: flex;
  align-items: center;
  height: 25px;
  padding: 0 4px 0 6px;
  border-bottom: 1px solid #d0d2d4;
  background: #f7f9f8;
`;
const ScaleBox = styled.div`
  display: flex;
  align-items: center;
  justify-content: space-between;
  width: 100px;
  height: 22px;
  margin-right: 4px;
  padding: 0 4px;
  border: 1px solid #777;
  background: #fff;
`;
const ScaleSelect = styled.select`
  appearance: none;
  flex: 1;
  padding: 0;
  border: 0;
  background: none;
  color: #222;
  font-size: 11px;
`;
const Caret = styled.i`
  border: 3px solid transparent;
  border-top-color: #444;
  border-bottom: 0;
`;
const Divider = styled.i`
  flex: none;
  width: 1px;
  height: 15px;
  background: #888;
`;
const StatusTools = styled.div`
  display: flex;
  gap: 4px;
  padding: 0 7px 0 6px;
`;
const Coordinates = styled.div`
  flex: 1;
  display: flex;
  align-items: center;
  justify-content: center;
  gap: 10px;
  font-size: 11px;
`;
const SelectedCount = styled.div`
  display: flex;
  align-items: center;
  gap: 4px;
  padding: 0 6px 0 7px;
  color: #999;
  font-size: 11px;
  svg {
    opacity: 0.6;
  }
`;
const StatusCell = styled.div`
  display: flex;
  align-items: center;
  justify-content: center;
  width: 29px;
  &:last-child {
    width: 24px;
    justify-content: flex-end;
  }
`;
const Attributes = styled.section`
  flex: none;
  display: flex;
  flex-direction: column;
  height: 220px;
`;
const TableTabs = styled.div`
  display: flex;
  align-items: flex-end;
  height: 30px;
  padding-top: 7px;
  border-bottom: 2px solid #0079cc;
`;
const TableTab = styled.button`
  display: flex;
  align-items: center;
  gap: 6px;
  height: 22px;
  padding: 2px 6px 0;
  margin-right: 26px;
  border: 0;
  border-radius: 3px 3px 0 0;
  background: ${(p) => (p.$active ? "#0079cc" : "none")};
  color: ${(p) => (p.$active ? "#fff" : "#222")};
  font-size: 11px;
  svg + svg, svg:last-child:not(:first-child) {
    margin-left: 3px;
  }
`;
const Toolbar = styled.div`
  display: flex;
  align-items: center;
  gap: 10px;
  height: 29px;
  margin: 2px 2px 0;
  padding: 0 3px 0 5px;
  border: 1px solid #c3c6ca;
  background: #eef0f3;
  font-size: 11px;
`;
const ToolLabel = styled.strong`
  margin-right: -2px;
  font-weight: 600;
`;
const ToolButton = styled.button`
  display: flex;
  align-items: center;
  gap: 4px;
  padding: 0;
  border: 0;
  background: none;
  white-space: nowrap;
  &:disabled {
    color: #bcbec0;
  }
  &:disabled svg {
    opacity: 0.45;
  }
`;
const ToolDivider = styled.i`
  width: 1px;
  height: 21px;
  background: #ccc;
`;
const GridArea = styled.div`
  flex: 1;
  display: flex;
  align-items: stretch;
  min-height: 0;
  margin: 2px 2px 0;
  border: 1px solid #c6c6c6;
  border-bottom: 0;
  overflow: hidden;
`;
const Grid = styled.table`
  flex: 1;
  width: 100%;
  align-self: flex-start;
  border-collapse: separate;
  border-spacing: 0;
  table-layout: fixed;
  font-size: 11px;
`;
const Col = styled.col`
  width: ${(p) => (p.$width ? `${p.$width}px` : "auto")};
`;
const Corner = styled.td`
  height: 23px;
  padding: 0;
  border-right: 1px solid #c6c6c6;
  border-bottom: 1px solid #c6c6c6;
  background: linear-gradient(135deg, transparent 50%, #c4c4c4 50%) right 3px bottom 3px / 10px 10px no-repeat #fff;
`;
const HeadCell = styled.th`
  height: 23px;
  padding: 0 4px;
  border-right: 1px solid #c6c6c6;
  border-bottom: 1px solid #c6c6c6;
  background: ${(p) => (p.$current ? "#c8e2f5" : "#ebebeb")};
  box-shadow: ${(p) => (p.$current ? "inset 0 -2px 0 #0079cc" : "none")};
  color: #3c3c3c;
  font-weight: 600;
  text-align: ${(p) => (p.$right ? "right" : "left")};
  white-space: nowrap;
`;
const Record = styled.tr`
  height: ${(p) => (p.$odd ? "23px" : "24px")};
  background: ${(p) => (p.$odd ? "#ebebeb" : "#fff")};
`;
const Cell = styled.td`
  padding: 0 4px;
  overflow: hidden;
  border-right: 1px solid #c6c6c6;
  border-bottom: 1px solid #c6c6c6;
  background: ${(p) => (p.$current ? "#c8e2f5" : "none")};
  text-align: ${(p) => (p.$right ? "right" : "left")};
  white-space: nowrap;
  &:last-child {
    border-right: 0;
  }
`;
const RowNumber = styled(Cell)`
  background: ${(p) => (p.$current ? "#c8e2f5" : "#ebebeb")};
  box-shadow: ${(p) => (p.$current ? "inset -2px 0 0 #0079cc" : "none")};
`;
const Edge = styled.div`
  flex: none;
  width: 5px;
  border: solid #c4c6c8;
  border-width: 0 1px;
  background: #f7f9f8;
`;
